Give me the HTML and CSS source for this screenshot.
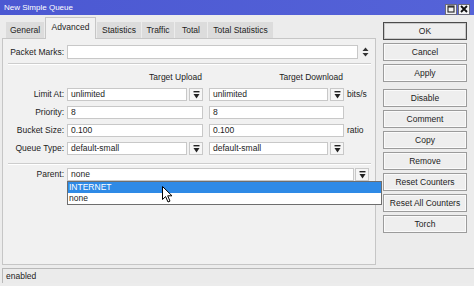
FILE: index.html
```html
<!DOCTYPE html>
<html lang="en">
  <head>
    <meta charset="UTF-8" />
    <meta name="viewport" content="width=device-width, initial-scale=1.0" />
    <title>New Simple Queue</title>
    <link rel="stylesheet" href="styles.css">
  </head>
  <body>
    <div id="window">
      <div class="titlebar">
        <span class="title">New Simple Queue</span>
        <div class="winbtns">
          <span class="winbtn">
            <svg width="8" height="8" viewBox="0 0 8 8"><rect x="1" y="1" width="6" height="6" fill="none" stroke="#333" stroke-width="1.2"/><rect x="1" y="1" width="6" height="1.6" fill="#333"/></svg>
          </span>
          <span class="winbtn">
            <svg width="8" height="8" viewBox="0 0 8 8"><path d="M1 1 L7 7 M7 1 L1 7" stroke="#111" stroke-width="1.8"/></svg>
          </span>
        </div>
      </div>

      <div class="main">
        <div class="dialog">
          <div class="tabs">
            <div class="tab">General</div>
            <div class="tab active">Advanced</div>
            <div class="tab">Statistics</div>
            <div class="tab">Traffic</div>
            <div class="tab">Total</div>
            <div class="tab">Total Statistics</div>
          </div>

          <div class="panel">
            <div class="row marks">
              <span class="lbl">Packet Marks:</span>
              <div class="input marks-input"></div>
              <svg class="updown" width="7" height="10" viewBox="0 0 7 10"><path d="M0.5 4 L3.5 0.5 L6.5 4 Z M0.5 6 L3.5 9.5 L6.5 6 Z" fill="#333"/></svg>
            </div>

            <div class="sep"></div>

            <div class="grid">
              <span></span>
              <span class="head up">Target Upload</span>
              <span class="head dl">Target Download</span>
              <span></span>

              <span class="lbl">Limit At:</span>
              <div class="combo up">
                <div class="input">unlimited</div>
                <div class="ddbtn"><svg width="7" height="8" viewBox="0 0 7 8"><rect x="0.5" y="0" width="6" height="1.4" fill="#222"/><path d="M0.5 3 L6.5 3 L3.5 7.5 Z" fill="#222"/></svg></div>
              </div>
              <div class="combo dl">
                <div class="input">unlimited</div>
                <div class="ddbtn"><svg width="7" height="8" viewBox="0 0 7 8"><rect x="0.5" y="0" width="6" height="1.4" fill="#222"/><path d="M0.5 3 L6.5 3 L3.5 7.5 Z" fill="#222"/></svg></div>
              </div>
              <span class="unit">bits/s</span>

              <span class="lbl">Priority:</span>
              <div class="input up">8</div>
              <div class="input dl">8</div>
              <span></span>

              <span class="lbl">Bucket Size:</span>
              <div class="input up">0.100</div>
              <div class="input dl">0.100</div>
              <span class="unit">ratio</span>

              <span class="lbl">Queue Type:</span>
              <div class="combo up">
                <div class="input">default-small</div>
                <div class="ddbtn"><svg width="7" height="8" viewBox="0 0 7 8"><rect x="0.5" y="0" width="6" height="1.4" fill="#222"/><path d="M0.5 3 L6.5 3 L3.5 7.5 Z" fill="#222"/></svg></div>
              </div>
              <div class="combo dl">
                <div class="input">default-small</div>
                <div class="ddbtn"><svg width="7" height="8" viewBox="0 0 7 8"><rect x="0.5" y="0" width="6" height="1.4" fill="#222"/><path d="M0.5 3 L6.5 3 L3.5 7.5 Z" fill="#222"/></svg></div>
              </div>
              <span></span>
            </div>

            <div class="sep second"></div>

            <div class="row parent">
              <span class="lbl">Parent:</span>
              <div class="combo parent-combo">
                <div class="input">none</div>
                <div class="ddbtn"><svg width="7" height="8" viewBox="0 0 7 8"><rect x="0.5" y="0" width="6" height="1.4" fill="#222"/><path d="M0.5 3 L6.5 3 L3.5 7.5 Z" fill="#222"/></svg></div>
                <ul class="droplist">
                  <li class="picked">INTERNET</li>
                  <li>none</li>
                </ul>
                <!-- mouse pointer sitting on the open list -->
                <svg class="pointer" width="11" height="17" viewBox="0 0 11 17"><path d="M0.5 0.5 L0.5 13.5 L3.6 10.6 L6 16 L8 15.1 L5.7 9.8 L10 9.8 Z" fill="#fff" stroke="#000" stroke-width="1"/></svg>
              </div>
            </div>
          </div>
        </div>

        <div class="buttons">
          <button class="btn default">OK</button>
          <button class="btn">Cancel</button>
          <button class="btn spaced">Apply</button>
          <button class="btn">Disable</button>
          <button class="btn">Comment</button>
          <button class="btn">Copy</button>
          <button class="btn">Remove</button>
          <button class="btn">Reset Counters</button>
          <button class="btn">Reset All Counters</button>
          <button class="btn">Torch</button>
        </div>
      </div>

      <div class="status">enabled</div>
    </div>
  </body>
</html>
```

FILE: styles.css
```css
body {
  margin: 0;
  font-family: "Liberation Sans", Arial, sans-serif;
  font-size: 8.5px;
  color: #1c1c1c;
  background-color: #ececec;
}
#window {
  width: 474px;
  height: 286px;
  overflow: hidden;
}
.titlebar {
  height: 15px;
  display: flex;
  align-items: center;
  justify-content: space-between;
  padding: 0 4px;
  background: linear-gradient(90deg, #4b58d2, #5563d8);
}
.title {
  color: #fff;
  font-size: 8px;
}
.winbtns {
  display: flex;
  gap: 1px;
  margin-top: 3px;
}
.winbtn {
  width: 10px;
  height: 9px;
  display: flex;
  align-items: center;
  justify-content: center;
  background-color: #f2f2f4;
  border: 1px solid #6a6a78;
}

.main {
  display: flex;
  height: 250px;
}
.dialog {
  width: 376px;
  padding-left: 2px;
  box-sizing: border-box;
}
.tabs {
  height: 23px;
  display: grid;
  grid-template-columns: 38px 51px 44px 32px 32px 65px;
  column-gap: 1px;
  align-items: end;
  padding-left: 4px;
  position: relative;
  z-index: 1;
}
.tab {
  height: 16px;
  line-height: 16px;
  text-align: center;
  background-color: #dcdcdc;
  white-space: nowrap;
}
.tab.active {
  height: 21px;
  line-height: 19px;
  background-color: #f1f1f1;
  border: 1px solid #c6c6c6;
  border-bottom: none;
  margin-bottom: -1px;
}
.panel {
  height: 227px;
  box-sizing: border-box;
  background-color: #f1f1f1;
  border: 1px solid #c6c6c6;
  padding-top: 6px;
}

.row {
  display: flex;
  align-items: center;
  gap: 3px;
}
.lbl {
  width: 61px;
  text-align: right;
  line-height: 13px;
  white-space: nowrap;
}
.marks {
  height: 14px;
}
.input {
  height: 13px;
  box-sizing: border-box;
  line-height: 11px;
  padding: 0 3px;
  background-color: #fff;
  border: 1px solid #c8c8c8;
  white-space: nowrap;
  overflow: hidden;
}
.marks-input {
  width: 291px;
  height: 14px;
}
.updown {
  margin-left: 1px;
}
.sep {
  margin: 4px 4px 0 5px;
  border-top: 1px solid #cdcdcd;
  border-bottom: 1px solid #fff;
}
.sep.second {
  margin-top: 8px;
}

.grid {
  margin-top: 7px;
  display: grid;
  grid-template-columns: 61px 136px 138px auto;
  grid-template-rows: 11px repeat(4, 13px);
  column-gap: 3px;
  row-gap: 5px;
}
.grid .dl {
  margin-left: 3px;
}
.head {
  text-align: right;
  line-height: 11px;
  padding-right: 1px;
}
.unit {
  line-height: 13px;
}
.combo {
  display: flex;
  gap: 2px;
  height: 13px;
}
.combo .input {
  flex: 1;
}
.ddbtn {
  width: 14px;
  height: 13px;
  box-sizing: border-box;
  display: flex;
  align-items: center;
  justify-content: center;
  background-color: #f6f6f6;
  border: 1px solid #c8c8c8;
}

.parent {
  margin-top: 3px;
  height: 13px;
}
.parent-combo {
  width: 302px;
  gap: 1px;
  position: relative;
}
.droplist {
  position: absolute;
  top: 13px;
  left: 0;
  width: 315px;
  margin: 0;
  padding: 0;
  list-style: none;
  background-color: #fff;
  border: 1px solid #6e6e6e;
  box-sizing: border-box;
  z-index: 2;
}
.droplist li {
  height: 11px;
  line-height: 11px;
  padding-left: 1px;
}
.droplist .picked {
  background-color: #2f8ae6;
  color: #fff;
}
.pointer {
  position: absolute;
  left: 95px;
  top: 18px;
  z-index: 3;
}

.buttons {
  width: 84px;
  margin: 7px 0 0 7px;
  display: flex;
  flex-direction: column;
  gap: 3px;
}
.btn {
  height: 18px;
  padding: 0;
  font-family: inherit;
  font-size: 8.5px;
  color: #1c1c1c;
  background-color: #eeeeee;
  border: 1px solid #9b9b9b;
  box-shadow: inset 0 0 0 1px #fafafa;
  white-space: nowrap;
}
.btn.default {
  border-color: #4c4c4c;
  box-shadow: inset 0 0 0 1px #c9c9c9;
}
.btn.spaced {
  margin-bottom: 4px;
}

.status {
  margin: 3px 0 0 2px;
  height: 15px;
  line-height: 14px;
  padding-left: 3px;
  background-color: #ebebeb;
  border-top: 1px solid #b9b9b9;
  border-left: 1px solid #b9b9b9;
  box-sizing: border-box;
}
```
